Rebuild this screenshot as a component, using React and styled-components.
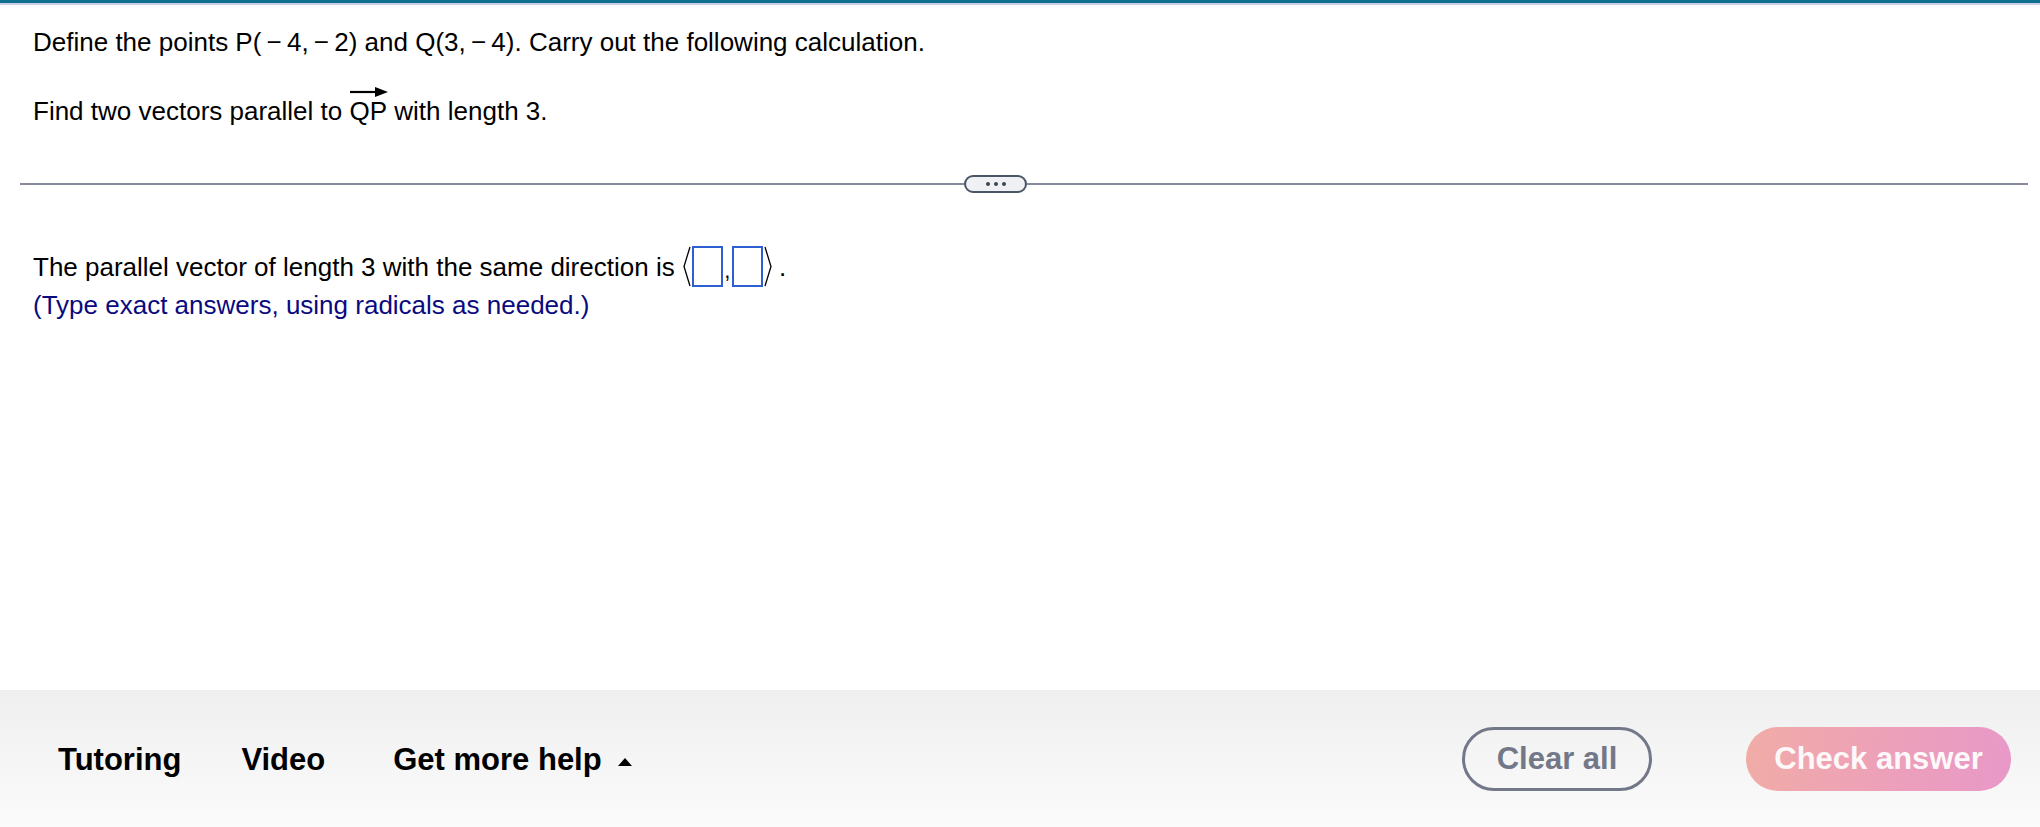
import React from "react";
import styled, { createGlobalStyle } from "styled-components";

const GlobalStyle = createGlobalStyle`
  html, body { margin: 0; padding: 0; background: #ffffff; }
  body { font-family: "Liberation Sans", Arial, Helvetica, sans-serif; color: #000; }
  * { box-sizing: border-box; }
`;

const Page = styled.div`
  width: 2040px;
  height: 827px;
  display: flex;
  flex-direction: column;
  background: #fff;
  overflow: hidden;
`;

const TopStripe = styled.div`
  height: 3px;
  background: #0e6f90;
  flex: none;
`;

const TopShade = styled.div`
  height: 2px;
  background: #c9cee0;
  flex: none;
`;

const Content = styled.main`
  flex: 1;
  display: flex;
  flex-direction: column;
  padding: 0 12px 0 20px;
`;

const Para = styled.p`
  margin: ${(p) => p.$mt || 0}px 0 0 13px;
  font-size: 26px;
  line-height: 30px;
  color: ${(p) => (p.$hint ? "#0a0a80" : "#000")};
`;

const VecName = styled.span`
  position: relative;
  display: inline-block;
`;

const VecArrow = styled.svg`
  position: absolute;
  left: 1px;
  top: -9px;
  width: 38px;
  height: 10px;
`;

const Divider = styled.div`
  margin-top: 49px;
  height: 18px;
  display: flex;
  align-items: center;
`;

const Rule = styled.div`
  height: 2px;
  background: #858b9d;
  flex: ${(p) => (p.$w ? `0 0 ${p.$w}px` : "1")};
`;

const MorePill = styled.div`
  flex: none;
  width: 63px;
  height: 18px;
  border: 2px solid #4b5566;
  border-radius: 9px;
  background: #eff1f5;
  display: flex;
  align-items: center;
  justify-content: center;
  gap: 4px;
`;

const Dot = styled.span`
  width: 4px;
  height: 4px;
  border-radius: 50%;
  background: #3d4452;
`;

const AnswerRow = styled.div`
  margin: 53px 0 0 13px;
  display: flex;
  align-items: center;
  height: 41px;
  font-size: 26px;
  line-height: 30px;
`;

const Bracket = styled.svg`
  width: 10px;
  height: 41px;
  flex: none;
`;

const InputBox = styled.span`
  display: inline-block;
  width: 31px;
  height: 41px;
  border: 2px solid #2d5fd0;
  background: #fff;
  flex: none;
`;

const Comma = styled.span`
  width: 9px;
  text-align: center;
  align-self: flex-end;
  line-height: 28px;
  margin-bottom: 2px;
  font-size: 22px;
`;

const Period = styled.span`
  margin-left: 6px;
`;

const Footer = styled.footer`
  flex: none;
  height: 137px;
  background: linear-gradient(#efefef, #fbfbfb);
  display: flex;
  align-items: center;
  justify-content: space-between;
  padding: 0 29px 0 58px;
`;

const HelpLinks = styled.nav`
  display: flex;
  align-items: center;
  gap: 60px;
  margin-top: 2px;
`;

const HelpLink = styled.span`
  font-weight: 700;
  font-size: 31px;
  color: #000;
  display: flex;
  align-items: center;
  gap: 16px;
  margin-left: ${(p) => p.$extra || 0}px;
`;

const Caret = styled.span`
  width: 0;
  height: 0;
  border-left: 7px solid transparent;
  border-right: 7px solid transparent;
  border-bottom: 8px solid #000;
  margin-top: 4px;
`;

const Actions = styled.div`
  display: flex;
  align-items: center;
  gap: 94px;
`;

const PillButton = styled.button`
  width: ${(p) => p.$w}px;
  height: 64px;
  border-radius: 32px;
  font-family: "Liberation Sans", Arial, sans-serif;
  font-weight: 700;
  font-size: 31px;
  display: flex;
  align-items: center;
  justify-content: center;
  padding: 0;
  cursor: pointer;
  ${(p) =>
    p.$primary
      ? `
    border: none;
    color: #fdf8fa;
    background: linear-gradient(100deg, #f1aca6 0%, #eda1b8 50%, #e898c8 100%);
  `
      : `
    border: 3px solid #737889;
    color: #737889;
    background: transparent;
  `}
`;

export default function App() {
  return (
    <Page>
      <GlobalStyle />
      <TopStripe />
      <TopShade />
      <Content>
        <Para $mt={22}>
          Define the points P(&thinsp;−&thinsp;4,&thinsp;−&thinsp;2) and Q(3,&thinsp;−&thinsp;4). Carry out the following calculation.
        </Para>
        <Para $mt={39}>
          Find two vectors parallel to{" "}
          <VecName>
            <VecArrow viewBox="0 0 38 10">
              <line x1="0" y1="5" x2="27" y2="5" stroke="#000" strokeWidth="2.2" />
              <polygon points="25,0 38,5 25,10" fill="#000" />
            </VecArrow>
            QP
          </VecName>{" "}
          with length 3.
        </Para>
        <Divider>
          <Rule $w={944} />
          <MorePill>
            <Dot />
            <Dot />
            <Dot />
          </MorePill>
          <Rule />
        </Divider>
        <AnswerRow>
          <span>The parallel vector of length 3 with the same direction is&nbsp;</span>
          <Bracket viewBox="0 0 10 41">
            <polyline points="8,1 2,20.5 8,40" fill="none" stroke="#000" strokeWidth="1.3" />
          </Bracket>
          <InputBox />
          <Comma>,</Comma>
          <InputBox />
          <Bracket viewBox="0 0 10 41">
            <polyline points="2,1 8,20.5 2,40" fill="none" stroke="#000" strokeWidth="1.3" />
          </Bracket>
          <Period>.</Period>
        </AnswerRow>
        <Para $hint $mt={3}>(Type exact answers, using radicals as needed.)</Para>
      </Content>
      <Footer>
        <HelpLinks>
          <HelpLink>Tutoring</HelpLink>
          <HelpLink>Video</HelpLink>
          <HelpLink $extra={8}>
            Get more help <Caret />
          </HelpLink>
        </HelpLinks>
        <Actions>
          <PillButton $w={190}>Clear all</PillButton>
          <PillButton $w={265} $primary>
            Check answer
          </PillButton>
        </Actions>
      </Footer>
    </Page>
  );
}
